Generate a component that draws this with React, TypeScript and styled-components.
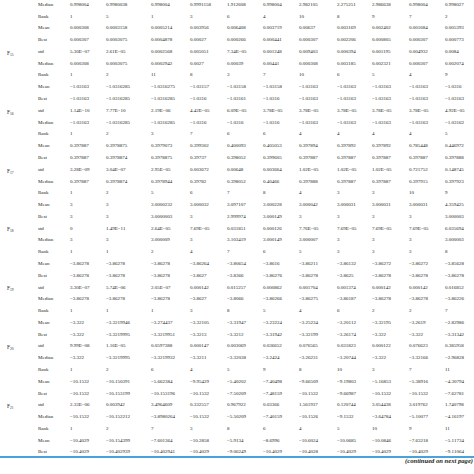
import React from 'react';
import styled, { createGlobalStyle } from 'styled-components';

const GlobalStyle = createGlobalStyle`
  html, body {
    margin: 0;
    padding: 0;
    background: #fff;
  }
`;

const Page = styled.div`
  width: 474px;
  height: 474px;
  overflow: hidden;
  background: #fff;
  color: #231f20;
  font-family: "Liberation Serif", "Times New Roman", serif;
`;

const Table = styled.table`
  border-collapse: collapse;
  table-layout: fixed;
  width: 474px;
  margin-top: -1.6px;
  margin-bottom: -1.5px;
`;

const Col = styled.col<{ $w: number }>`
  width: ${(p) => p.$w}px;
`;

const Row = styled.tr`
  height: 11.79px;
`;

const Cell = styled.td`
  padding: 0;
  font-size: 5px;
  line-height: 1;
  white-space: nowrap;
  vertical-align: middle;
  overflow: visible;
`;

const LabelCell = styled.td`
  padding: 4px 0 0 7px;
  font-size: 5.4px;
  line-height: 1;
  white-space: nowrap;
  vertical-align: middle;
`;

const Sub = styled.sub`
  font-size: 3.6px;
  line-height: 0;
  vertical-align: -1.2px;
`;

const Rule = styled.div`
  height: 1.3px;
  background: #4aa2dd;
`;

const Continued = styled.p`
  margin: 0;
  padding-right: 1px;
  text-align: right;
  font-style: italic;
  font-weight: 700;
  font-size: 6.6px;
  line-height: 6px;
`;

type Group = { label?: string; rows: string[][] };

const widths = [38, 32, 36, 45, 39, 37, 36, 36, 38, 35, 37, 36, 29];

const groups: Group[] = [
  {
    rows: [
      ['Median', '0.998004', '0.9980038', '0.998004', '0.9991158', '1.912608', '0.998004', '2.982105', '2.275251', '2.986638', '0.998004', '0.998027'],
      ['Rank', '1', '5', '1', '3', '6', '4', '10', '8', '9', '7', '2'],
    ],
  },
  {
    label: '15',
    rows: [
      ['Mean', '0.000308', '0.0003158', '0.0005214', '0.003956', '0.006408', '0.003719', '0.00637', '0.003169', '0.002402', '0.001684', '0.005393'],
      ['Best', '0.000307', '0.0003075', '0.0004878', '0.00027', '0.000266', '0.000441', '0.000307', '0.002206', '0.000805', '0.000307', '0.000773'],
      ['std', '5.30E−07', '2.61E−05', '0.0002568', '0.005051', '7.34E−05', '0.001248', '0.009403', '0.000394', '0.001195', '0.004932', '0.0084'],
      ['Median', '0.000308', '0.0003075', '0.0002942', '0.0027', '0.00039', '0.00441', '0.000308', '0.003185', '0.002321', '0.000307', '0.002074'],
      ['Rank', '1', '2', '11', '8', '3', '7', '10', '6', '5', '4', '9'],
    ],
  },
  {
    label: '16',
    rows: [
      ['Mean', '−1.03163', '−1.0316285', '−1.0316275', '−1.03157', '−1.03158', '−1.03158', '−1.03163', '−1.03163', '−1.03163', '−1.03163', '−1.0316'],
      ['Best', '−1.03163', '−1.0316285', '−1.0316285', '−1.0316', '−1.03161', '−1.0316', '−1.03163', '−1.03163', '−1.03163', '−1.03163', '−1.03163'],
      ['std', '1.14E−10', '7.77E−10', '2.19E−06', '4.42E−05', '6.09E−05', '3.78E−05', '3.78E−05', '3.78E−05', '3.78E−05', '3.78E−05', '4.92E−05'],
      ['Median', '−1.03163', '−1.0316285', '−1.0316285', '−1.0316', '−1.0316', '−1.0316', '−1.03163', '−1.03163', '−1.03163', '−1.03163', '−1.03162'],
      ['Rank', '1', '2', '3', '7', '6', '6', '4', '4', '4', '4', '5'],
    ],
  },
  {
    label: '17',
    rows: [
      ['Mean', '0.397887', '0.3978875', '0.3979073', '0.399302', '0.400093', '0.405053', '0.397894', '0.397892', '0.397892', '0.785448', '0.446972'],
      ['Best', '0.397887', '0.3978874', '0.3978875', '0.39737', '0.398052', '0.399605', '0.397887', '0.397887', '0.397887', '0.397887', '0.397888'],
      ['std', '3.28E−09', '3.04E−07', '2.95E−05', '0.003672', '0.00648', '0.003664', '1.02E−05', '1.02E−05', '1.02E−05', '0.721752', '0.148745'],
      ['Median', '0.397887', '0.3978874', '0.3978944', '0.39782', '0.398052', '0.40466', '0.397888', '0.397887', '0.397887', '0.397915', '0.397923'],
      ['Rank', '1', '2', '5', '6', '7', '8', '4', '3', '3', '10', '9'],
    ],
  },
  {
    label: '18',
    rows: [
      ['Mean', '3', '3', '3.0000232', '3.000032', '3.097107', '3.000228', '3.000042', '3.000031', '3.000031', '3.000031', '4.359425'],
      ['Best', '3', '3', '3.0000003', '3', '2.999974', '3.000149', '3', '3', '3', '3', '3.000003'],
      ['std', '0', '1.49E−11', '2.64E−05', '7.69E−05', '0.031851', '0.000126', '7.76E−05', '7.69E−05', '7.69E−05', '7.69E−05', '6.035694'],
      ['Median', '3', '3', '3.000009', '3', '3.103419', '3.000149', '3.000007', '3', '3', '3', '3.000003'],
      ['Rank', '1', '1', '2', '4', '7', '6', '5', '3', '3', '3', '8'],
    ],
  },
  {
    label: '19',
    rows: [
      ['Mean', '−3.86278', '−3.86278', '−3.86278', '−3.86264', '−3.80654', '−3.8616', '−3.86211', '−3.86132', '−3.86272', '−3.86272', '−3.85628'],
      ['Best', '−3.86278', '−3.86278', '−3.86278', '−3.8627', '−3.8366', '−3.86276', '−3.86278', '−3.8625', '−3.86278', '−3.86278', '−3.86278'],
      ['std', '3.30E−07', '5.74E−06', '2.05E−07', '0.000142', '0.015257', '0.000862', '0.001704', '0.001374', '0.000142', '0.000142', '0.016852'],
      ['Median', '−3.86278', '−3.86278', '−3.86278', '−3.8627', '−3.8066', '−3.86266', '−3.86275', '−3.86187', '−3.86278', '−3.86278', '−3.86226'],
      ['Rank', '1', '1', '1', '3', '8', '5', '4', '6', '2', '2', '7'],
    ],
  },
  {
    label: '20',
    rows: [
      ['Mean', '−3.322', '−3.3219946', '−3.274437', '−3.32105', '−3.31947', '−3.23224', '−3.25234', '−3.20112', '−3.32195', '−3.2619', '−2.82986'],
      ['Best', '−3.322', '−3.3219995', '−3.3219951', '−3.3213', '−3.3212', '−3.31942', '−3.32199', '−3.26174', '−3.322', '−3.322', '−3.31342'],
      ['std', '9.99E−08', '1.16E−05', '0.0597388', '0.000147', '0.003069', '0.036652', '0.076565', '0.031823', '0.000122', '0.076623', '0.385958'],
      ['Median', '−3.322', '−3.3219995', '−3.3219932', '−3.3211', '−3.32038', '−3.2424', '−3.26231', '−3.20744', '−3.322', '−3.32166', '−2.96828'],
      ['Rank', '1', '2', '6', '4', '5', '9', '8', '10', '3', '7', '11'],
    ],
  },
  {
    label: '21',
    rows: [
      ['Mean', '−10.1532', '−10.150391', '−5.662384', '−9.95429', '−5.40202', '−7.40498', '−9.66509', '−9.19803', '−5.16853', '−5.38916', '−4.30794'],
      ['Best', '−10.1532', '−10.153199', '−10.153196', '−10.1532', '−7.50209', '−7.48159', '−10.1532', '−9.66987', '−10.1532', '−10.1532', '−7.62781'],
      ['std', '2.33E−06', '0.003942', '3.4964609', '0.332557', '0.967922', '0.03366', '1.561937', '0.120744', '3.054438', '3.019762', '1.740798'],
      ['Median', '−10.1532', '−10.152212', '−3.8980264', '−10.1532', '−5.50209', '−7.40159', '−10.1526', '−9.1532', '−3.64784', '−5.10077', '−4.16197'],
      ['Rank', '1', '2', '7', '3', '8', '6', '4', '5', '10', '9', '11'],
    ],
  },
  {
    rows: [
      ['Mean', '−10.4029', '−10.154399', '−7.601364', '−10.2858', '−5.9134', '−8.6996', '−10.6024', '−10.0685', '−10.0846', '−7.63218', '−5.11734'],
      ['Best', '−10.4029', '−10.402939', '−10.402941', '−10.4029', '−9.06249', '−10.4029', '−10.4028', '−10.4029', '−10.4029', '−10.4029', '−9.11064'],
    ],
  },
];

const GroupRows = ({ group }: { group: Group }) => (
  <>
    {group.rows.map((row, i) => (
      <Row key={i}>
        {i === 0 && (
          <LabelCell rowSpan={group.rows.length}>
            {group.label && (
              <>
                F<Sub>{group.label}</Sub>
              </>
            )}
          </LabelCell>
        )}
        {row.map((value, j) => (
          <Cell key={j}>{value}</Cell>
        ))}
      </Row>
    ))}
  </>
);

const App = () => (
  <Page>
    <GlobalStyle />
    <Table>
      <colgroup>
        {widths.map((w, i) => (
          <Col key={i} $w={w} />
        ))}
      </colgroup>
      <tbody>
        {groups.map((g, i) => (
          <GroupRows key={i} group={g} />
        ))}
      </tbody>
    </Table>
    <Rule />
    <Continued>(continued on next page)</Continued>
  </Page>
);

export default App;
